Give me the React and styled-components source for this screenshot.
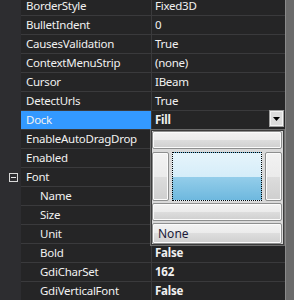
import React from "react";
import styled, { createGlobalStyle } from "styled-components";

const GlobalStyle = createGlobalStyle`
  html, body { margin: 0; padding: 0; background: #252526; }
  body { font-family: "Noto Sans", "Open Sans", sans-serif; }
`;

const rows = [
  { name: "BorderStyle", value: "Fixed3D" },
  { name: "BulletIndent", value: "0" },
  { name: "CausesValidation", value: "True" },
  { name: "ContextMenuStrip", value: "(none)" },
  { name: "Cursor", value: "IBeam" },
  { name: "DetectUrls", value: "True" },
  { name: "Dock", value: "Fill", bold: true, selected: true, dropdown: true },
  { name: "EnableAutoDragDrop", value: "" },
  { name: "Enabled", value: "" },
  { name: "Font", value: "", category: true },
  { name: "Name", value: "", child: true },
  { name: "Size", value: "", child: true },
  { name: "Unit", value: "", child: true },
  { name: "Bold", value: "False", child: true, bold: true },
  { name: "GdiCharSet", value: "162", child: true, bold: true },
  { name: "GdiVerticalFont", value: "False", child: true, bold: true },
];

export default function App() {
  return (
    <>
      <GlobalStyle />
      <Container>
        <Grid>
          <List>
            {rows.map((r) => (
              <Row key={r.name}>
                <Margin>{r.category && <Collapse />}</Margin>
                <Label $selected={r.selected} $child={r.child}>
                  {r.name}
                </Label>
                <Value $bold={r.bold}>
                  {r.value}
                  {r.dropdown && (
                    <>
                      <DropButton>
                        <svg width="7" height="4" viewBox="0 0 7 4">
                          <path d="M0 0h7L3.5 4z" fill="#000" />
                        </svg>
                      </DropButton>
                      <DockPicker />
                    </>
                  )}
                </Value>
              </Row>
            ))}
          </List>
        </Grid>
        <Scrollbar />
      </Container>
    </>
  );
}

function DockPicker() {
  return (
    <Panel>
      <Edge $h={18} />
      <Middle>
        <Edge $w={17} />
        <FillBox />
        <Edge $w={17} />
      </Middle>
      <Edge $h={18} />
      <NoneButton>None</NoneButton>
    </Panel>
  );
}

const Container = styled.div`
  width: 294px;
  height: 300px;
  overflow: hidden;
  display: flex;
  background: #252526;
`;

const Grid = styled.div`
  flex: 1;
  overflow: hidden;
  background: linear-gradient(to right, #2d2d30 21px, #252526 21px);
`;

const List = styled.div`
  margin-top: -3px;
`;

const Row = styled.div`
  display: grid;
  grid-template-columns: 21px 130px 1px 1fr;
  height: 19px;
  font-size: 11.5px;
  letter-spacing: -0.25px;
  color: #f1f1f1;
`;

const Margin = styled.div`
  position: relative;
  background: #2d2d30;
`;

const Collapse = styled.span`
  position: absolute;
  left: 9px;
  top: 5px;
  width: 9px;
  height: 9px;
  box-sizing: border-box;
  border: 1px solid #d8d8d8;
  &::after {
    content: "";
    position: absolute;
    left: 1px;
    top: 3px;
    width: 5px;
    height: 1px;
    background: #e8e8e8;
  }
`;

const Label = styled.div`
  grid-column: 2 / 4;
  padding-left: ${(p) => (p.$child ? "19px" : "5px")};
  line-height: 18px;
  white-space: nowrap;
  overflow: hidden;
  border-bottom: 1px solid #3a3a3c;
  border-right: 1px solid #3a3a3c;
  background: ${(p) => (p.$selected ? "#3399ff" : "transparent")};
`;

const Value = styled.div`
  position: relative;
  padding-left: 3px;
  line-height: 18px;
  font-weight: ${(p) => (p.$bold ? 700 : 400)};
  border-bottom: 1px solid #3a3a3c;
  white-space: nowrap;
`;

const DropButton = styled.div`
  position: absolute;
  right: 1px;
  top: -1px;
  width: 15px;
  height: 17px;
  box-sizing: border-box;
  display: flex;
  align-items: center;
  justify-content: center;
  background: #dcdcdc;
  border: 1px solid #a0a0a0;
  box-shadow: inset 0 0 0 1px #f4f4f4;
`;

const Panel = styled.div`
  position: absolute;
  z-index: 2;
  left: -2px;
  top: 18px;
  width: 135px;
  height: 117px;
  box-sizing: border-box;
  padding: 1px 2px 1px 1px;
  display: flex;
  flex-direction: column;
  gap: 2px;
  background: #d9d9d9;
  border: 1px solid #6d6d6d;
  box-shadow: inset 0 0 0 1px #3c3c3c;
  font-weight: 400;
  letter-spacing: 0;
`;

const buttonFace = `
  box-sizing: border-box;
  border: 1px solid #8e8f8f;
  border-radius: 2px;
  box-shadow: inset 0 0 0 1px #fbfbfb;
  background: linear-gradient(#f2f2f2 0%, #ebebeb 50%, #dddddd 50%, #cfcfcf 100%);
`;

const Edge = styled.div`
  ${buttonFace}
  ${(p) => (p.$h ? `height: ${p.$h}px;` : "")}
  ${(p) => (p.$w ? `width: ${p.$w}px;` : "")}
`;

const Middle = styled.div`
  display: flex;
  gap: 3px;
  height: 50px;
  margin-top: 1px;
`;

const FillBox = styled.div`
  flex: 1;
  box-sizing: border-box;
  border: 1px dotted #000;
  background: linear-gradient(#e6f4fb 0%, #d5edf9 50%, #93cdea 52%, #6eb8de 100%);
`;

const NoneButton = styled.div`
  ${buttonFace}
  flex: 1;
  padding-left: 5px;
  line-height: 19px;
  font-size: 12px;
  color: #1b1b3a;
`;

const Scrollbar = styled.div`
  width: 9px;
  box-sizing: border-box;
  background: #6b6b6b;
  border-left: 1px solid #8a8a8a;
`;
